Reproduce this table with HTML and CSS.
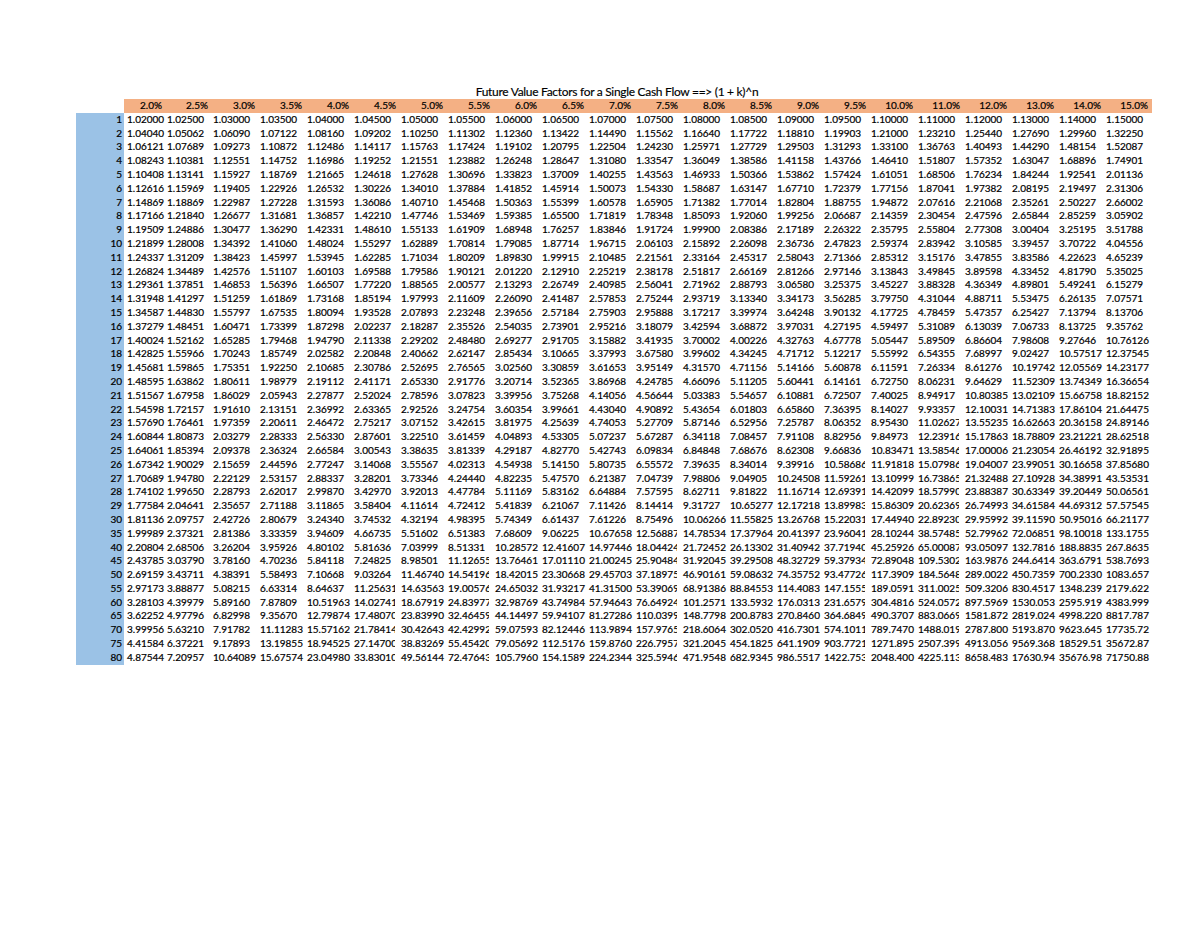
FILE: index.html
```html
<!DOCTYPE html>
<html>
<head>
<meta charset="utf-8">
<title>Future Value Factors</title>
<link rel="stylesheet" href="styles.css">
</head>
<body>
<div class="page">
  <div class="title">Future Value Factors for a Single Cash Flow ==&gt; (1 + k)^n</div>
  <div class="sheet" id="sheet"></div>
</div>
<script src="script.js"></script>
</body>
</html>
```

FILE: styles.css
```css
html, body {
  margin: 0;
  padding: 0;
  background: #ffffff;
}
.page {
  padding: 84px 0 0 76px;
  font-family: "Lato", "Open Sans", sans-serif;
  color: #000;
}
.title {
  width: 1082px;
  text-align: center;
  font-size: 12px;
  letter-spacing: -0.3px;
  line-height: 15px;
  height: 15px;
  -webkit-text-stroke: 0.15px #000;
}
.sheet {
  display: grid;
  grid-template-columns: 48px 42px 46px repeat(20, 47px);
  grid-auto-rows: 13.8px;
  font-size: 10px;
  line-height: 13.8px;
  -webkit-text-stroke: 0.2px #000;
}
.corner {
  background: #ffffff;
}
.hd {
  background: #f4b084;
  text-align: right;
  padding-right: 4px;
  white-space: nowrap;
  overflow: hidden;
}
.rn {
  background: #9bc2e6;
  text-align: right;
  padding-right: 2px;
  white-space: nowrap;
}
.c {
  white-space: nowrap;
  overflow: hidden;
  padding-left: 1px;
}
.c.first {
  padding-left: 3px;
}
.c.clip {
  clip-path: inset(0 5px 0 0);
}
```

FILE: script.js
```javascript
(function () {
  var rates = [2, 2.5, 3, 3.5, 4, 4.5, 5, 5.5, 6, 6.5, 7, 7.5, 8, 8.5, 9, 9.5, 10, 11, 12, 13, 14, 15];
  var clipCols = { 5: true, 7: true, 11: true, 15: true, 17: true };
  var periods = [];
  for (var i = 1; i <= 30; i++) periods.push(i);
  for (var j = 35; j <= 80; j += 5) periods.push(j);
  var sheet = document.getElementById('sheet');
  var frag = document.createDocumentFragment();
  function cell(cls, text) {
    var d = document.createElement('div');
    d.className = cls;
    d.textContent = text;
    frag.appendChild(d);
  }
  cell('corner', '');
  rates.forEach(function (r) { cell('hd', r.toFixed(1) + '%'); });
  periods.forEach(function (n) {
    cell('rn', String(n));
    rates.forEach(function (r, k) {
      var v = Math.pow(1 + r / 100, n);
      var s = v < 10 ? v.toFixed(5) : v.toPrecision(7);
      var cls = 'c' + (k === 0 ? ' first' : '') + (clipCols[k] ? ' clip' : '');
      cell(cls, s);
    });
  });
  sheet.appendChild(frag);
})();
```
